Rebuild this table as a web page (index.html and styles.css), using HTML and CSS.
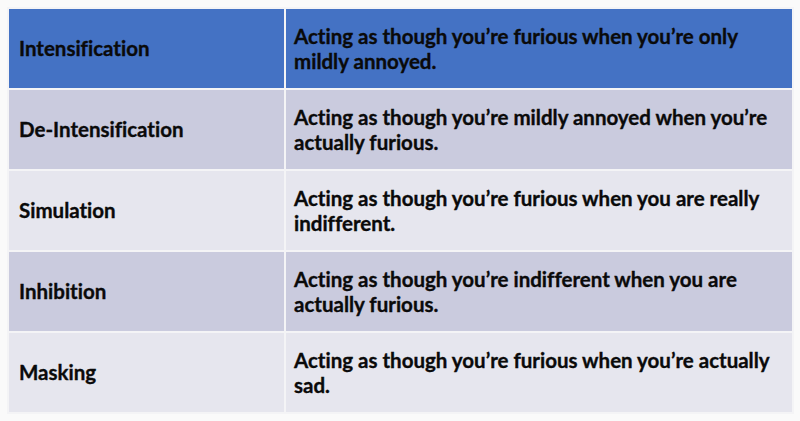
FILE: index.html
```html
<!DOCTYPE html>
<html>
<head>
<meta charset="utf-8">
<link rel="stylesheet" href="styles.css">
</head>
<body>
<div class="frame">
<table class="grid">
<tr class="head"><td class="term">Intensification</td><td class="desc">Acting as though you’re furious when you’re only mildly annoyed.</td></tr>
<tr class="dark"><td class="term">De-Intensification</td><td class="desc">Acting as though you’re mildly annoyed when you’re actually furious.</td></tr>
<tr class="light"><td class="term">Simulation</td><td class="desc">Acting as though you’re furious when you are really indifferent.</td></tr>
<tr class="dark"><td class="term">Inhibition</td><td class="desc">Acting as though you’re indifferent when you are actually furious.</td></tr>
<tr class="light"><td class="term">Masking</td><td class="desc">Acting as though you’re furious when you’re actually sad.</td></tr>
</table>
</div>
</body>
</html>
```
FILE: styles.css
```css
html, body { margin: 0; padding: 0; background: #fafafa; }
.frame {
  width: 800px; height: 421px; box-sizing: border-box;
  padding: 7px 7px 0 7px;
}
.grid {
  border-collapse: collapse;
  width: 787px;
  font-family: Lato, "Open Sans", sans-serif;
  font-weight: 700;
  font-size: 20.5px;
  font-variant-ligatures: none;
  -webkit-text-stroke: 0.35px #0a0a0a;
  color: #0a0a0a;
}
.grid td {
  border: 2px solid #f4f4f6;
  height: 79px;
  vertical-align: middle;
  line-height: 25px;
  padding: 0;
}
.term { width: 265px; padding-left: 10px !important; }
.desc { padding-left: 8px !important; padding-right: 16px !important; }
.head td { background: #4472c4; }
.dark td { background: #cacbde; }
.light td { background: #e6e6ee; }
```
